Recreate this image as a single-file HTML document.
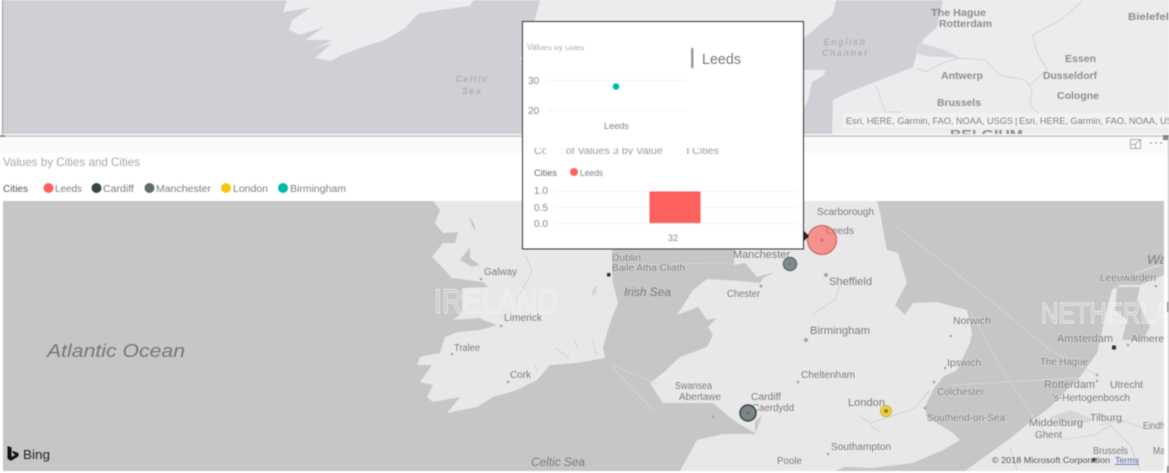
<!DOCTYPE html>
<html><head><meta charset="utf-8"><style>
html,body{margin:0;padding:0;background:#fff;width:1169px;height:473px;overflow:hidden}
svg{display:block;filter:blur(.45px);font-family:"Liberation Sans",sans-serif}
.a{font-size:10px;fill:#6a6a6a;font-weight:bold;opacity:.72}
.c{font-size:10px;fill:#7b7b7b;paint-order:stroke;stroke:#ececec;stroke-width:1.4px;stroke-opacity:.5}
.l{font-size:10px;fill:#7d7d7d}
.t{font-size:9px;fill:#858585}
.i{font-style:italic}
.o{fill:none;stroke:#f6f6f6;stroke-width:.9;font-weight:normal;opacity:.85}
.b{fill:none;stroke:#cdcdcf;stroke-width:.8}
.s{fill:none;stroke:#d6d6d6;stroke-width:.9}
</style></head><body>
<svg width="1169" height="473" viewBox="0 0 1169 473" xmlns="http://www.w3.org/2000/svg">
<defs>
<clipPath id="m2"><rect x="3" y="201" width="1161" height="270"/></clipPath>
<clipPath id="m1"><rect x="3" y="0" width="1166" height="134"/></clipPath>
</defs>
<rect width="1169" height="473" fill="#fff"/>

<!-- top map -->
<rect x="2" y="0" width="1167" height="134" fill="#cfcfd5"/>
<rect x="2" y="0" width="1" height="134" fill="#9a9a9a"/>
<g clip-path="url(#m1)">
<polygon fill="#ececee" points="287,0 283,12 310,8 292,20 289,30 300,35 324,27 305,40 333,40 315,48 332,43 315,58 330,61 342,55 360,48 385,40 405,28 418,14 440,10 470,6 474,0"/>
<polygon fill="#ececee" points="540,0 836,0 833,14 816,28 804,38 790,60 520,60 536,16"/>
<polygon fill="#ececee" points="804,70 826,70 823,76 812,82 808,100 804,108"/>
<polygon fill="#ececee" points="943,0 937,27 923,40 918,50 913,67 880,80 847,93 833,100 832,134 1169,134 1169,0"/>
<polygon fill="#d6d6db" points="918,42 945,50 960,58 925,56 915,52"/>
<path class="b" d="M917,68 L925,72 L945,62 L960,58 L985,60 L1000,75 L1025,80 M1025,80 L1032,90 L1030,105 L1040,115 M1033,35 L1060,20 L1070,12 L1083,0 M1033,35 L1036,50 L1047,70 L1030,85 M876,85 L885,112 L900,112 L915,127"/>
</g>
<text class="t i" x="472" y="82" text-anchor="middle" style="font-size:9px;fill:#b0b0b6;font-weight:bold;letter-spacing:1.4px">Celtic</text>
<text class="t i" x="472" y="94" text-anchor="middle" style="font-size:9px;fill:#b0b0b6;font-weight:bold;letter-spacing:1.4px">Sea</text>
<text class="t i" x="845" y="45" text-anchor="middle" style="font-size:9px;fill:#b0b0b6;font-weight:bold;letter-spacing:1.5px">English</text>
<text class="t i" x="845" y="56" text-anchor="middle" style="font-size:9px;fill:#b0b0b6;font-weight:bold;letter-spacing:1.5px">Channel</text>
<text class="a" x="931" y="16" textLength="55" lengthAdjust="spacingAndGlyphs">The Hague</text>
<text class="a" x="939" y="27" textLength="53" lengthAdjust="spacingAndGlyphs">Rotterdam</text>
<text class="a" x="1128" y="20" textLength="48" lengthAdjust="spacingAndGlyphs">Bielefeld</text>
<text class="a" x="1065" y="62" textLength="31" lengthAdjust="spacingAndGlyphs">Essen</text>
<text class="a" x="1043" y="79" textLength="54" lengthAdjust="spacingAndGlyphs">Dusseldorf</text>
<text class="a" x="1057" y="99" textLength="42" lengthAdjust="spacingAndGlyphs">Cologne</text>
<text class="a" x="941" y="79" textLength="42" lengthAdjust="spacingAndGlyphs">Antwerp</text>
<text class="a" x="937" y="106" textLength="44" lengthAdjust="spacingAndGlyphs">Brussels</text>
<g clip-path="url(#m1)"><text class="a" x="950" y="139" style="font-size:13px" textLength="73" lengthAdjust="spacingAndGlyphs">BELGIUM</text></g>
<rect x="843" y="113" width="326" height="15" fill="#f3f3f3" opacity=".85"/>
<text class="t" x="846" y="124" style="fill:#808080" textLength="167" lengthAdjust="spacingAndGlyphs">Esri, HERE, Garmin, FAO, NOAA, USGS</text>
<text class="t" x="1015" y="124" style="fill:#808080">|</text>
<text class="t" x="1019" y="124" style="fill:#808080" textLength="167" lengthAdjust="spacingAndGlyphs">Esri, HERE, Garmin, FAO, NOAA, USGS</text>

<!-- divider and header -->
<rect x="0" y="134" width="1169" height="1" fill="#fff"/>
<rect x="0" y="135" width="1169" height="2" fill="#d0d0d0"/>
<rect x="0" y="135" width="5" height="2" fill="#8a8a8a"/>
<rect x="0" y="137" width="1169" height="16" fill="#fafafa"/>
<rect x="1163" y="135" width="6" height="5" fill="#888"/>
<rect x="1168" y="137" width="1" height="336" fill="#bbb"/>
<path d="M1130.5,139.5h10v9h-10zM1130.5,144.5h5v4M1135,144l5,-4" fill="none" stroke="#999" stroke-width=".8"/>
<circle cx="1151" cy="143" r=".8" fill="#777"/><circle cx="1156" cy="143" r=".8" fill="#777"/><circle cx="1161" cy="143" r=".8" fill="#777"/>
<text x="3" y="166" style="font-size:12px;fill:#a8a8a8" textLength="137" lengthAdjust="spacingAndGlyphs">Values by Cities and Cities</text>
<text x="3" y="192" style="font-size:10px;fill:#555" textLength="25" lengthAdjust="spacingAndGlyphs">Cities</text>
<circle cx="48.5" cy="188" r="5" fill="#fd625e"/><text x="55" y="192" class="l" textLength="27" lengthAdjust="spacingAndGlyphs">Leeds</text>
<circle cx="96.5" cy="188" r="5" fill="#374649"/><text x="103" y="192" class="l" textLength="31" lengthAdjust="spacingAndGlyphs">Cardiff</text>
<circle cx="149.5" cy="188" r="5" fill="#5f6b6d"/><text x="156" y="192" class="l" textLength="55" lengthAdjust="spacingAndGlyphs">Manchester</text>
<circle cx="226" cy="188" r="5" fill="#f2c80f"/><text x="233" y="192" class="l" textLength="35" lengthAdjust="spacingAndGlyphs">London</text>
<circle cx="283" cy="188" r="5" fill="#01b8aa"/><text x="290" y="192" class="l" textLength="56" lengthAdjust="spacingAndGlyphs">Birmingham</text>

<!-- main map -->
<rect x="3" y="201" width="1161" height="270" fill="#c6c6c6"/>
<g clip-path="url(#m2)">
<!-- Ireland -->
<polygon fill="#e8e8e8" points="433,201 440,210 435,223 443,233 458,232 455,243 443,243 432,257 442,267 452,278 483,282 488,287 462,288 462,313 453,320 480,318 483,320 497,325 480,330 458,332 445,337 440,353 420,357 417,365 432,365 420,382 433,385 427,397 433,402 460,397 447,413 477,407 493,397 517,390 537,380 550,365 577,363 605,358 603,347 610,323 618,303 613,283 612,270 612,201"/>
<polygon fill="#c6c6c6" points="469,216 474,224 476,232 472,226"/>
<polygon fill="#c6c6c6" points="460,260 470,247 470,258 480,265 472,267"/>
<polygon fill="#d4d4d4" points="593,288 597,285 596,293 592,296"/>
<path class="b" d="M525,255 L532,270 L528,280 L516,300 M577,348 L575,340 M593,340 L596,355 M555,348 L570,358 M535,365 L537,372"/>
<!-- GB -->
<polygon fill="#e8e8e8" points="734,265 745,263 757,277 775,272 763,278 760,283 740,281 707,279 693,290 677,315 698,307 707,320 717,318 708,327 713,335 707,347 680,357 663,373 650,383 663,403 713,403 733,420 755,433 755,422 793,383 762,415 755,434 723,434 697,440 680,471 860,471 880,467 913,463 943,450 960,440 953,433 937,423 927,418 925,407 933,390 943,377 957,370 970,343 972,333 967,310 937,302 913,303 905,315 895,305 907,283 898,253 887,250 884,235 880,212 877,201 734,201"/>
<!-- Continental coast -->
<polygon fill="#e8e8e8" points="965,471 1008,440 1033,420 1050,407 1080,377 1097,353 1108,305 1112,290 1120,285 1140,285 1164,275 1164,471"/>
<polygon fill="#c6c6c6" points="1117,287 1140,287 1137,300 1150,327 1143,340 1122,340 1127,320 1115,310"/>
<path d="M1135,273 L1164,264" stroke="#dcdcdc" stroke-width="1.500" fill="none"/>
<polygon fill="#d6d6d6" points="1050,417 1070,410 1095,420 1075,425"/>
<polygon fill="#c6c6c6" points="835,471 845,467 875,468 880,471"/>
<path class="b" d="M730,270 L722,262 M840,285 L835,300 L822,308 L812,315 M858,415 L870,423 L895,415 L915,408 L930,390 M870,425 L880,432 M1010,447 L1017,470 M1060,440 L1095,435 L1110,425 L1130,445 L1140,470 M1100,425 L1120,420 L1150,430"/>
<!-- sea lines -->
<path class="s" d="M895,225 L990,300 L1050,350 L1097,375 M970,310 L1005,375 L1050,440 M950,385 L1080,378 M612,365 L660,385 M612,367 L655,412"/>
<path d="M612,265 L730,263" stroke="#d8d8d8" fill="none" stroke-dasharray="2 1"/>
<!-- country names -->
<text x="434" y="313" class="o" style="font-size:34px" textLength="124" lengthAdjust="spacingAndGlyphs">IRELAND</text>
<text x="1041" y="323" class="o" style="font-size:29px" textLength="180" lengthAdjust="spacingAndGlyphs">NETHERLANDS</text>
<!-- dots -->
<rect x="607" y="273" width="3.5" height="3.5" fill="#333"/>
<rect x="1112" y="345.500" width="4" height="4" fill="#333"/>
<g fill="#a5a5a5">
<circle cx="481" cy="279" r="1.3"/><circle cx="501" cy="326" r="1.3"/><circle cx="452" cy="354" r="1.3"/><circle cx="508" cy="382" r="1.3"/>
<circle cx="826" cy="275" r="2"/><circle cx="761" cy="286" r="1.500"/><circle cx="806" cy="340" r="2"/><circle cx="951" cy="336" r="1.300"/><circle cx="798" cy="382" r="1.300"/>
<circle cx="713" cy="417" r="1.300"/><circle cx="828" cy="454" r="1.300"/><circle cx="945" cy="368" r="1.300"/><circle cx="934" cy="382" r="1.300"/><circle cx="925" cy="408" r="1.300"/>
<circle cx="1097" cy="381" r="1.300"/><circle cx="1097" cy="375" r="1.300"/><circle cx="1128" cy="345" r="1.300"/><circle cx="1156" cy="286" r="1.300"/>
</g>
<!-- labels -->
<text class="c" x="817" y="215" textLength="57" lengthAdjust="spacingAndGlyphs">Scarborough</text>
<text class="c" x="826" y="234" textLength="28" lengthAdjust="spacingAndGlyphs">Leeds</text>
<text class="c" x="733" y="258" style="font-size:11px" textLength="57" lengthAdjust="spacingAndGlyphs">Manchester</text>
<text class="c" x="612" y="261" textLength="29" lengthAdjust="spacingAndGlyphs">Dublin</text>
<text class="c" x="612" y="271" textLength="73" lengthAdjust="spacingAndGlyphs">Baile Atha Cliath</text>
<text class="c" x="484" y="275" textLength="33" lengthAdjust="spacingAndGlyphs">Galway</text>
<text class="c" x="829" y="285" style="font-size:11px" textLength="43" lengthAdjust="spacingAndGlyphs">Sheffield</text>
<text class="c i" x="624" y="296" style="font-size:12px;stroke:none" textLength="47" lengthAdjust="spacingAndGlyphs">Irish Sea</text>
<text class="c" x="727" y="297" textLength="33" lengthAdjust="spacingAndGlyphs">Chester</text>
<text class="c" x="504" y="321" textLength="38" lengthAdjust="spacingAndGlyphs">Limerick</text>
<text class="c" x="810" y="334" style="font-size:11px" textLength="60" lengthAdjust="spacingAndGlyphs">Birmingham</text>
<text class="c" x="953" y="324" textLength="38" lengthAdjust="spacingAndGlyphs">Norwich</text>
<text class="c" x="454" y="351" textLength="26" lengthAdjust="spacingAndGlyphs">Tralee</text>
<text class="c i" x="47" y="357" style="font-size:18px;fill:#777;stroke:none" textLength="138" lengthAdjust="spacingAndGlyphs">Atlantic Ocean</text>
<text class="c" x="1057" y="342" style="font-size:11px" textLength="56" lengthAdjust="spacingAndGlyphs">Amsterdam</text>
<text class="c" x="1131" y="342" textLength="33" lengthAdjust="spacingAndGlyphs">Almere</text>
<text class="c" x="1100" y="281" textLength="56" lengthAdjust="spacingAndGlyphs">Leeuwarden</text>
<text class="c i" x="1147" y="264" style="font-size:13px;stroke:none" textLength="20" lengthAdjust="spacingAndGlyphs">Wa</text>
<text class="c" x="1040" y="365" textLength="48" lengthAdjust="spacingAndGlyphs">The Hague</text>
<text class="c" x="947" y="366" textLength="34" lengthAdjust="spacingAndGlyphs">Ipswich</text>
<text class="c" x="801" y="378" textLength="54" lengthAdjust="spacingAndGlyphs">Cheltenham</text>
<text class="c" x="1044" y="388" style="font-size:11px" textLength="51" lengthAdjust="spacingAndGlyphs">Rotterdam</text>
<text class="c" x="1110" y="388" textLength="33" lengthAdjust="spacingAndGlyphs">Utrecht</text>
<text class="c" x="1052" y="401" textLength="78" lengthAdjust="spacingAndGlyphs">'s-Hertogenbosch</text>
<text class="c" x="510" y="378" textLength="21" lengthAdjust="spacingAndGlyphs">Cork</text>
<text class="c" x="675" y="389" textLength="37" lengthAdjust="spacingAndGlyphs">Swansea</text>
<text class="c" x="679" y="400" textLength="42" lengthAdjust="spacingAndGlyphs">Abertawe</text>
<text class="c" x="751" y="400" textLength="30" lengthAdjust="spacingAndGlyphs">Cardiff</text>
<text class="c" x="752" y="411" textLength="42" lengthAdjust="spacingAndGlyphs">Caerdydd</text>
<text class="c" x="848" y="406" style="font-size:11px" textLength="37" lengthAdjust="spacingAndGlyphs">London</text>
<text class="c" x="937" y="395" textLength="47" lengthAdjust="spacingAndGlyphs">Colchester</text>
<text class="c" x="927" y="421" textLength="78" lengthAdjust="spacingAndGlyphs">Southend-on-Sea</text>
<text class="c" x="1029" y="426" textLength="54" lengthAdjust="spacingAndGlyphs">Middelburg</text>
<text class="c" x="1090" y="421" textLength="32" lengthAdjust="spacingAndGlyphs">Tilburg</text>
<text class="c" x="1143" y="429" textLength="22" lengthAdjust="spacingAndGlyphs">Eindh</text>
<text class="c" x="1035" y="438" textLength="27" lengthAdjust="spacingAndGlyphs">Ghent</text>
<text class="c" x="831" y="450" textLength="60" lengthAdjust="spacingAndGlyphs">Southampton</text>
<text class="c" x="777" y="464" textLength="25" lengthAdjust="spacingAndGlyphs">Poole</text>
<text class="c" x="1093" y="454" textLength="35" lengthAdjust="spacingAndGlyphs">Brussels</text>
<text class="c" x="1153" y="454" textLength="12" lengthAdjust="spacingAndGlyphs">Ma</text>
<text class="c i" x="531" y="466" style="font-size:12px;stroke:none" textLength="54" lengthAdjust="spacingAndGlyphs">Celtic Sea</text>
<rect x="1092" y="458" width="3.500" height="3.500" fill="#333"/>
<text x="992" y="463" style="font-size:8px;fill:#555" textLength="118" lengthAdjust="spacingAndGlyphs">© 2018 Microsoft Corporation</text>
<text x="1115" y="463" style="font-size:8px;fill:#4a6db5;text-decoration:underline" textLength="24" lengthAdjust="spacingAndGlyphs">Terms</text>
<!-- Bing -->
<path d="M7.500,446 l4,1.400 v9.600 l4,-2.200 -2.200,-1 -1.300,-3 6.500,2.300 v3.200 l-7.500,4.400 -3.500,-2z" fill="#111"/>
<text x="23" y="459" style="font-size:13px;fill:#222" textLength="27" lengthAdjust="spacingAndGlyphs">Bing</text>
<!-- bubbles -->
<circle cx="822" cy="240" r="14.500" fill="#fd625e" fill-opacity=".65" stroke="#c85a58" stroke-width="1"/>
<circle cx="822" cy="240" r="1.300" fill="#c85a58"/>
<circle cx="790" cy="264" r="6.500" fill="#7f8a8b" stroke="#5f6b6d" stroke-width="1.500"/>
<circle cx="790" cy="264" r="1" fill="#666"/>
<circle cx="748" cy="413" r="8" fill="#7c8586" stroke="#374649" stroke-width="1.500"/>
<circle cx="748" cy="413" r="1" fill="#555"/>
<circle cx="886" cy="411" r="5.500" fill="#edce55" stroke="#d9b320" stroke-width="1"/>
<circle cx="886" cy="411" r="2" fill="#9a7d10"/>
<polygon points="804,231 809,236 804,241" fill="#222"/>
</g>

<!-- right marks -->
<rect x="1167" y="302" width="2" height="10" fill="#999"/>
<rect x="1167" y="466" width="2" height="7" fill="#888"/>

<!-- tooltip -->
<rect x="522.500" y="21.500" width="281" height="227.500" fill="#fff" stroke="#333" stroke-width="1"/>
<text x="527" y="50" style="font-size:9.500px;fill:#aaa" textLength="57" lengthAdjust="spacingAndGlyphs">Values by cities</text>
<rect x="541" y="38" width="46" height="8" fill="#fff"/>
<rect x="691" y="48" width="2.500" height="20" fill="#999"/>
<text x="702" y="64" style="font-size:15px;fill:#777" textLength="39" lengthAdjust="spacingAndGlyphs">Leeds</text>
<rect x="548" y="80" width="138" height="1" fill="#f3f3f3"/>
<rect x="548" y="110" width="138" height="1" fill="#f3f3f3"/>
<text x="528" y="84" style="font-size:10px;fill:#888">30</text>
<text x="528" y="114" style="font-size:10px;fill:#888">20</text>
<circle cx="616" cy="86.500" r="3.300" fill="#01b8aa"/>
<text x="604" y="129" class="t" textLength="25" lengthAdjust="spacingAndGlyphs">Leeds</text>
<text x="534" y="154" style="font-size:10px;fill:#999" textLength="185" lengthAdjust="spacingAndGlyphs">Count of Values 3 by Values and Cities</text>
<rect x="530" y="140" width="195" height="8" fill="#fff"/>
<rect x="546" y="148" width="16" height="8" fill="#fff"/>
<rect x="663" y="148" width="24" height="8" fill="#fff"/>
<rect x="530" y="155" width="195" height="4" fill="#fff"/>
<text x="534" y="176" style="font-size:9.500px;fill:#666" textLength="23" lengthAdjust="spacingAndGlyphs">Cities</text>
<circle cx="574" cy="172" r="4" fill="#fd625e"/>
<text x="580" y="176" class="t" textLength="23" lengthAdjust="spacingAndGlyphs">Leeds</text>
<rect x="556" y="191" width="241" height="1" fill="#f3f3f3"/>
<rect x="556" y="207" width="241" height="1" fill="#f3f3f3"/>
<rect x="556" y="223" width="241" height="1" fill="#f3f3f3"/>
<text x="534" y="194" style="font-size:10px;fill:#888">1.0</text>
<text x="534" y="211" style="font-size:10px;fill:#888">0.5</text>
<text x="534" y="227" style="font-size:10px;fill:#888">0.0</text>
<rect x="649.500" y="191.500" width="51" height="31.500" fill="#fd625e"/>
<text x="668" y="241" class="t">32</text>
</svg>
</body></html>
